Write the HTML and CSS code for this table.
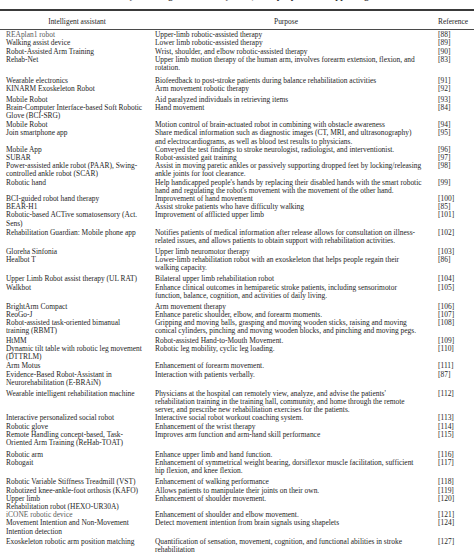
FILE: index.html
```html
<!DOCTYPE html>
<html lang="en">
<head>
<meta charset="utf-8">
<title>Intelligent assistants</title>
<link rel="stylesheet" href="styles.css">
</head>
<body>
<div class="caption"><p>Table 2. Summary of intelligent assistant systems, their purpose and supporting references</p></div>
<div class="table">
  <div class="row head">
    <div class="c1">Intelligent assistant</div>
    <div class="c2">Purpose</div>
    <div class="c3">Reference</div>
  </div>
  <div class="body">
    <div class="row"><div class="c1 muted">REAplan1 robot</div><div class="c2">Upper-limb robotic-assisted therapy</div><div class="c3">[88]</div></div>
    <div class="row"><div class="c1">Walking assist device</div><div class="c2">Lower limb robotic-assisted therapy</div><div class="c3">[89]</div></div>
    <div class="row"><div class="c1">Robot-Assisted Arm Training</div><div class="c2">Wrist, shoulder, and elbow robotic-assisted therapy</div><div class="c3">[90]</div></div>
    <div class="row"><div class="c1">Rehab-Net</div><div class="c2">Upper limb motion therapy of the human arm, involves forearm extension, flexion, and<br>rotation.</div><div class="c3">[83]</div></div>
    <div class="row gap5"><div class="c1">Wearable electronics</div><div class="c2">Biofeedback to post-stroke patients during balance rehabilitation activities</div><div class="c3">[91]</div></div>
    <div class="row"><div class="c1">KINARM Exoskeleton Robot</div><div class="c2">Arm movement robotic therapy</div><div class="c3">[92]</div></div>
    <div class="row gap2"><div class="c1">Mobile Robot</div><div class="c2">Aid paralyzed individuals in retrieving items</div><div class="c3">[93]</div></div>
    <div class="row"><div class="c1">Brain-Computer Interface-based Soft Robotic<br>Glove (BCI-SRG)</div><div class="c2">Hand movement</div><div class="c3">[84]</div></div>
    <div class="row gap1"><div class="c1">Mobile Robot</div><div class="c2">Motion control of brain-actuated robot in combining with obstacle awareness</div><div class="c3">[94]</div></div>
    <div class="row"><div class="c1">Join smartphone app</div><div class="c2">Share medical information such as diagnostic images (CT, MRI, and ultrasonography)<br>and electrocardiograms, as well as blood test results to physicians.</div><div class="c3">[95]</div></div>
    <div class="row"><div class="c1">Mobile App</div><div class="c2">Conveyed the test findings to stroke neurologist, radiologist, and interventionist.</div><div class="c3">[96]</div></div>
    <div class="row"><div class="c1">SUBAR</div><div class="c2">Robot-assisted gait training</div><div class="c3">[97]</div></div>
    <div class="row"><div class="c1">Power-assisted ankle robot (PAAR), Swing-<br>controlled ankle robot (SCAR)</div><div class="c2">Assist in moving paretic ankles or passively supporting dropped feet by locking/releasing<br>ankle joints for foot clearance.</div><div class="c3">[98]</div></div>
    <div class="row"><div class="c1">Robotic hand</div><div class="c2">Help handicapped people's hands by replacing their disabled hands with the smart robotic<br>hand and regulating the robot's movement with the movement of the other hand.</div><div class="c3">[99]</div></div>
    <div class="row"><div class="c1">BCI-guided robot hand therapy</div><div class="c2">Improvement of hand movement</div><div class="c3">[100]</div></div>
    <div class="row"><div class="c1">BEAR-H1</div><div class="c2">Assist stroke patients who have difficulty walking</div><div class="c3">[85]</div></div>
    <div class="row"><div class="c1">Robotic-based ACTive somatosensory (Act.<br>Sens)</div><div class="c2">Improvement of afflicted upper limb</div><div class="c3">[101]</div></div>
    <div class="row gap1"><div class="c1">Rehabilitation Guardian: Mobile phone app</div><div class="c2">Notifies patients of medical information after release allows for consultation on illness-<br>related issues, and allows patients to obtain support with rehabilitation activities.</div><div class="c3">[102]</div></div>
    <div class="row gap3"><div class="c1">Gloreha Sinfonia</div><div class="c2">Upper limb neuromotor therapy</div><div class="c3">[103]</div></div>
    <div class="row"><div class="c1">Healbot T</div><div class="c2">Lower-limb rehabilitation robot with an exoskeleton that helps people regain their<br>walking capacity.</div><div class="c3">[86]</div></div>
    <div class="row gap3"><div class="c1">Upper Limb Robot assist therapy (UL RAT)</div><div class="c2">Bilateral upper limb rehabilitation robot</div><div class="c3">[104]</div></div>
    <div class="row"><div class="c1">Walkbot</div><div class="c2">Enhance clinical outcomes in hemiparetic stroke patients, including sensorimotor<br>function, balance, cognition, and activities of daily living.</div><div class="c3">[105]</div></div>
    <div class="row gap3"><div class="c1">BrightArm Compact</div><div class="c2">Arm movement therapy</div><div class="c3">[106]</div></div>
    <div class="row"><div class="c1">ReoGo-J</div><div class="c2">Enhance paretic shoulder, elbow, and forearm moments.</div><div class="c3">[107]</div></div>
    <div class="row"><div class="c1">Robot-assisted task-oriented bimanual<br>training (RBMT)</div><div class="c2">Gripping and moving balls, grasping and moving wooden sticks, raising and moving<br>conical cylinders, pinching and moving wooden blocks, and pinching and moving pegs.</div><div class="c3">[108]</div></div>
    <div class="row gap1"><div class="c1">HtMM</div><div class="c2">Robot-assisted Hand-to-Mouth Movement.</div><div class="c3">[109]</div></div>
    <div class="row"><div class="c1">Dynamic tilt table with robotic leg movement<br>(DTTRLM)</div><div class="c2">Robotic leg mobility, cyclic leg loading.</div><div class="c3">[110]</div></div>
    <div class="row gap1"><div class="c1">Arm Motus</div><div class="c2">Enhancement of forearm movement.</div><div class="c3">[111]</div></div>
    <div class="row"><div class="c1">Evidence-Based Robot-Assistant in<br>Neurorehabilitation (E-BRAiN)</div><div class="c2">Interaction with patients verbally.</div><div class="c3">[87]</div></div>
    <div class="row gap3"><div class="c1">Wearable intelligent rehabilitation machine</div><div class="c2">Physicians at the hospital can remotely view, analyze, and advise the patients'<br>rehabilitation training in the training hall, community, and home through the remote<br>server, and prescribe new rehabilitation exercises for the patients.</div><div class="c3">[112]</div></div>
    <div class="row"><div class="c1">Interactive personalized social robot</div><div class="c2">Interactive social robot workout coaching system.</div><div class="c3">[113]</div></div>
    <div class="row"><div class="c1">Robotic glove</div><div class="c2">Enhancement of the wrist therapy</div><div class="c3">[114]</div></div>
    <div class="row"><div class="c1">Remote Handling concept-based, Task-<br>Oriented Arm Training (ReHab-TOAT)</div><div class="c2">Improves arm function and arm-hand skill performance</div><div class="c3">[115]</div></div>
    <div class="row gap4"><div class="c1">Robotic arm</div><div class="c2">Enhance upper limb and hand function.</div><div class="c3">[116]</div></div>
    <div class="row"><div class="c1">Robogait</div><div class="c2">Enhancement of symmetrical weight bearing, dorsiflexor muscle facilitation, sufficient<br>hip flexion, and knee flexion.</div><div class="c3">[117]</div></div>
    <div class="row gap3"><div class="c1">Robotic Variable Stiffness Treadmill (VST)</div><div class="c2">Enhancement of walking performance</div><div class="c3">[118]</div></div>
    <div class="row"><div class="c1">Robotized knee-ankle-foot orthosis (KAFO)</div><div class="c2">Allows patients to manipulate their joints on their own.</div><div class="c3">[119]</div></div>
    <div class="row"><div class="c1">Upper limb<br>Rehabilitation robot (HEXO-UR30A)</div><div class="c2">Enhancement of shoulder movement.</div><div class="c3">[120]</div></div>
    <div class="row"><div class="c1 muted">iCONE robotic device</div><div class="c2">Enhancement of shoulder and elbow movement.</div><div class="c3">[121]</div></div>
    <div class="row"><div class="c1">Movement Intention and Non-Movement<br>Intention detection</div><div class="c2">Detect movement intention from brain signals using shapelets</div><div class="c3">[124]</div></div>
    <div class="row gap2"><div class="c1">Exoskeleton robotic arm position matching</div><div class="c2">Quantification of sensation, movement, cognition, and functional abilities in stroke<br>rehabilitation</div><div class="c3">[127]</div></div>
  </div>
</div>
</body>
</html>
```
FILE: styles.css
```css
html, body {
  margin: 0;
  padding: 0;
  background: #ffffff;
}

body {
  font-family: "Liberation Serif", "Times New Roman", serif;
  color: #1e1e1e;
  font-size: 7.45px;
  line-height: 8.2px;
  overflow: hidden;
}

.caption {
  height: 9px;
  overflow: hidden;
}

.caption p {
  margin: -8px 0 0;
  font-size: 9px;
  line-height: 9px;
  font-weight: bold;
  text-align: center;
  color: #333;
}

.table {
  border-top: 2px solid #3a3a3a;
}

.row {
  display: grid;
  grid-template-columns: 149px 283px 1fr;
  padding-left: 6px;
  white-space: nowrap;
}

.head {
  padding-top: 7px;
  padding-bottom: 2.8px;
  border-bottom: 1px solid #4a4a4a;
}

.head .c1 {
  text-align: center;
  padding-right: 7px;
}

.head .c2 {
  text-align: center;
  padding-right: 21px;
}

.body {
  padding-top: 1.2px;
}

.muted {
  color: #5a5a5a;
}

.gap1 { padding-top: 1px; }
.gap2 { padding-top: 2px; }
.gap3 { padding-top: 2.8px; }
.gap4 { padding-top: 3.8px; }
.gap5 { padding-top: 5px; }
```
